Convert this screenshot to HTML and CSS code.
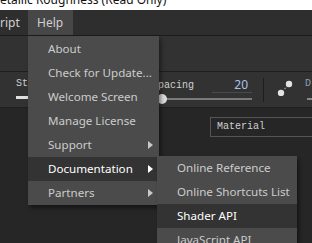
FILE: index.html
```html
<!DOCTYPE html>
<html lang="en">
<head>
    <meta charset="UTF-8">
    <title>Help menu</title>
    <link rel="stylesheet" href="styles.css">
</head>
<body>

<div class="title-bar">Metallic Roughness (Read Only)</div>

<div class="menubar">
    <div class="menubar-item first">ript</div>
    <div class="menubar-item active">Help</div>
</div>

<div class="toolbar"></div>

<div class="toolbar">
    <div class="tool tool-stroke">
        <div class="tool-label">Stroke</div>
        <div class="stroke-bar"></div>
    </div>
    <div class="tool tool-spacing">
        <div class="tool-head">
            <span class="tool-label">Spacing</span>
            <span class="tool-value">20</span>
        </div>
        <div class="slider"><span class="knob"></span></div>
    </div>
    <div class="divider"></div>
    <div class="dots">
        <svg width="16" height="16" viewBox="0 0 16 16">
            <circle cx="12" cy="4" r="3.2" fill="#e4e4e4"/>
            <circle cx="4" cy="13" r="3.2" fill="#e4e4e4"/>
            <circle cx="8" cy="8.5" r="0.8" fill="#9a9a9a"/>
            <circle cx="9.6" cy="6.8" r="0.6" fill="#8a8a8a"/>
        </svg>
    </div>
    <div class="tool tool-d">
        <div class="tool-label">D</div>
        <div class="slider"></div>
    </div>
</div>

<div class="workspace">
    <div class="select">Material</div>
</div>

<div class="menu help-menu">
    <div class="menu-item">About</div>
    <div class="menu-item">Check for Update...</div>
    <div class="menu-item">Welcome Screen</div>
    <div class="menu-item">Manage License</div>
    <div class="menu-item has-sub">Support</div>
    <div class="menu-item has-sub selected">Documentation</div>
    <div class="menu-item has-sub">Partners</div>
</div>

<div class="menu doc-menu">
    <div class="menu-item">Online Reference</div>
    <div class="menu-item">Online Shortcuts List</div>
    <div class="menu-item selected">Shader API</div>
    <div class="menu-item">JavaScript API</div>
</div>

</body>
</html>
```

FILE: styles.css
```css
* {
    box-sizing: border-box;
    margin: 0;
    padding: 0;
}

html, body {
    height: 100%;
    overflow: hidden;
}

body {
    font-family: 'Noto Sans', 'Open Sans', sans-serif;
    font-size: 12px;
    background: #262626;
    color: #c8c8c8;
    position: relative;
}

.title-bar {
    height: 10px;
    overflow: hidden;
    background: #fff;
    color: #111;
    font-size: 12px;
    line-height: 0;
    white-space: nowrap;
    text-indent: -11px;
}

.menubar {
    display: flex;
    height: 26px;
    background: #2e2e2e;
    border-bottom: 1px solid #1c1c1c;
}

.menubar-item {
    padding: 0 10px 0 9px;
    line-height: 26px;
    font-size: 12px;
    color: #d0d0d0;
}

.menubar-item.first {
    width: 28px;
    padding: 0;
}

.menubar-item.active {
    background: #474747;
}

.toolbar {
    display: flex;
    align-items: flex-start;
    height: 36px;
    background: #323232;
    border-bottom: 1px solid #1e1e1e;
    overflow: hidden;
}

.toolbar > * {
    flex-shrink: 0;
}

.tool {
    display: flex;
    flex-direction: column;
    padding-top: 5px;
}

.tool-label {
    font-family: 'Liberation Mono', monospace;
    font-size: 10px;
    color: #cfcfcf;
    line-height: 14px;
}

.tool-stroke {
    margin-left: 16px;
    width: 120px;
}

.stroke-bar {
    margin-top: 5px;
    width: 12px;
    height: 3px;
    background: #e0e0e0;
}

.tool-spacing {
    margin-left: 16px;
    width: 100px;
}

.tool-head {
    display: flex;
    justify-content: space-between;
    align-items: flex-end;
    height: 16px;
}

.tool-value {
    font-size: 12px;
    line-height: 14px;
    color: #a9c4e2;
    width: 40px;
    text-align: right;
    padding-right: 4px;
    border-bottom: 1px solid #4a4a4a;
}

.slider {
    position: relative;
    margin-top: 5px;
    height: 2px;
    background: #7a7a7a;
}

.knob {
    position: absolute;
    left: 5px;
    top: -4px;
    width: 10px;
    height: 10px;
    border-radius: 50%;
    background: #dcdcdc;
}

.divider {
    width: 1px;
    height: 24px;
    margin: 6px 0 0 11px;
    background: #1e1e1e;
}

.dots {
    display: flex;
    margin: 8px 0 0 13px;
}

.tool-d {
    margin-left: 12px;
    width: 30px;
}

.tool-d .tool-label {
    color: #8aa0b8;
}

.tool-d .slider {
    margin-top: 7px;
    margin-left: 2px;
    background: #888;
}

.workspace {
    padding: 9px 0 0 210px;
}

.select {
    width: 120px;
    height: 20px;
    border: 1px solid #555;
    font-family: 'Liberation Mono', monospace;
    font-size: 10px;
    line-height: 18px;
    padding-left: 6px;
    color: #d0d0d0;
}

.menu {
    position: absolute;
    display: flex;
    flex-direction: column;
    background: #4b4b4b;
    box-shadow: 2px 3px 4px rgba(0, 0, 0, 0.45);
}

.help-menu {
    left: 28px;
    top: 36px;
    width: 131px;
    padding-top: 1px;
}

.doc-menu {
    left: 157px;
    top: 156px;
    width: 140px;
}

.menu-item {
    position: relative;
    height: 24px;
    line-height: 24px;
    padding-left: 20px;
    font-size: 11.6px;
    color: #cbcbcb;
    white-space: nowrap;
}

.menu-item.selected {
    background: #333;
    color: #fff;
}

.has-sub::after {
    content: '';
    position: absolute;
    left: 120px;
    top: 8px;
    border-left: 5px solid #c8c8c8;
    border-top: 4px solid transparent;
    border-bottom: 4px solid transparent;
}

.has-sub.selected::after {
    border-left-color: #fff;
}

.help-menu .has-sub.selected {
    margin-right: -2px;
}
```
